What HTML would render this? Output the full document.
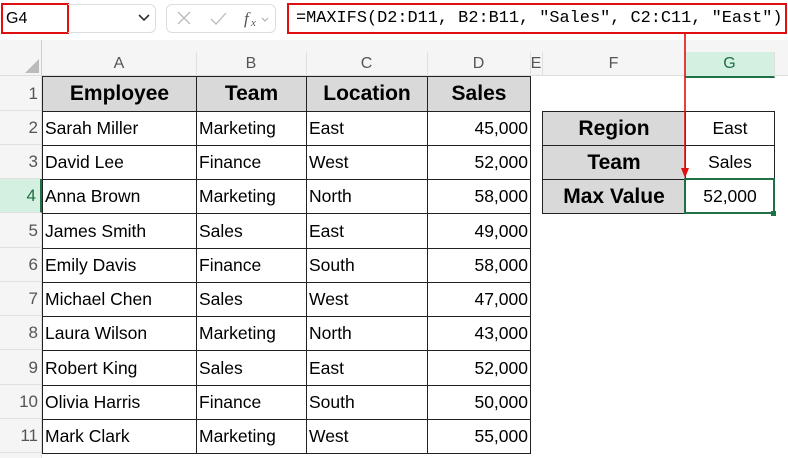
<!DOCTYPE html>
<html><head><style>
body{margin:0;width:788px;height:458px;overflow:hidden;background:#fff;font-family:"Liberation Sans",Arial,sans-serif;position:relative}
.a{position:absolute;box-sizing:border-box}
.ch{position:absolute;top:52px;height:24px;line-height:24px;text-align:center;color:#555;font-size:16px;border-right:1px solid #e0e0e0}
.rh{position:absolute;left:0;width:42px;text-align:right;padding-right:4px;box-sizing:border-box;color:#555;font-size:17px;border-bottom:1px solid #e0e0e0}
table{border-collapse:collapse;position:absolute;left:42px;top:76px}
td{border:1px solid #222;font-size:17.5px;padding:0 2px;white-space:nowrap;box-sizing:border-box}
td.h{background:#d9d9d9;font-weight:bold;font-size:21px;text-align:center}
td.n{text-align:right}
table.s{left:542px;top:111px}
table.s td{height:34px}
</style></head><body>
<div class="a" style="left:1px;top:3px;width:68px;height:31px;border:2px solid #e01010;font-size:16px;line-height:27px;padding-left:3px">G4</div>
<div class="a" style="left:68px;top:4px;width:88px;height:29px;border:1px solid #ddd;border-left:none;border-radius:0 6px 6px 0"></div>
<svg class="a" style="left:137px;top:13px" width="14" height="10"><path d="M2 2 L7 7 L12 2" stroke="#333" stroke-width="1.6" fill="none"/></svg>
<div class="a" style="left:166px;top:4px;width:110px;height:29px;border:1px solid #ddd;border-radius:6px"></div>
<svg class="a" style="left:174px;top:10px" width="100" height="18"><path d="M4 2 L16 14 M16 2 L4 14" stroke="#bbb" stroke-width="1.3"/><path d="M37 9 L42 14 L52 3" stroke="#bbb" stroke-width="1.3" fill="none"/><text x="70" y="14" font-family="Liberation Serif" font-style="italic" font-size="17" fill="#555">f</text><text x="77" y="16" font-family="Liberation Serif" font-style="italic" font-size="11" fill="#555">x</text><path d="M88 8 L91 11 L94 8" stroke="#aaa" fill="none"/></svg>
<div class="a" style="left:287px;top:3px;width:500px;height:31px;border:2px solid #e01010;font-family:'Liberation Mono',monospace;font-size:16.9px;line-height:27px;padding-left:7px;white-space:nowrap;overflow:hidden">=MAXIFS(D2:D11, B2:B11, "Sales", C2:C11, "East")</div>
<div class="a" style="left:0;top:40px;width:788px;height:12px;background:#f5f5f5"></div>
<div class="a" style="left:0;top:52px;width:788px;height:24px;background:#f5f5f5;border-bottom:1px solid #ddd"></div>
<div class="a" style="left:0;top:76px;width:42px;height:382px;background:#f5f5f5;border-right:1px solid #ddd"></div>
<div class="a" style="left:41px;top:40px;width:1px;height:36px;background:#ccc"></div>
<svg class="a" style="left:24px;top:58px" width="16" height="16"><path d="M15 1 L15 15 L1 15 Z" fill="#bbb"/></svg>
<div class="ch" style="left:42px;width:154px">A</div>
<div class="ch" style="left:196px;width:110px">B</div>
<div class="ch" style="left:306px;width:121px">C</div>
<div class="ch" style="left:427px;width:103px">D</div>
<div class="ch" style="left:530px;width:12px">E</div>
<div class="ch" style="left:542px;width:143px">F</div>
<div class="ch" style="left:685px;width:89px;background:#d3f0e0;color:#1e6e42;border-bottom:2px solid #1e7145">G</div>
<div class="rh" style="top:76px;height:35px;line-height:35px">1</div>
<div class="rh" style="top:111px;height:34px;line-height:34px">2</div>
<div class="rh" style="top:145px;height:34px;line-height:34px">3</div>
<div class="rh" style="top:179px;height:34px;line-height:34px;background:#d3f0e0;color:#1e6e42;border-right:2px solid #1e7145">4</div>
<div class="rh" style="top:213px;height:35px;line-height:35px">5</div>
<div class="rh" style="top:248px;height:34px;line-height:34px">6</div>
<div class="rh" style="top:282px;height:34px;line-height:34px">7</div>
<div class="rh" style="top:316px;height:34px;line-height:34px">8</div>
<div class="rh" style="top:350px;height:35px;line-height:35px">9</div>
<div class="rh" style="top:385px;height:34px;line-height:34px">10</div>
<div class="rh" style="top:419px;height:34px;line-height:34px">11</div>
<table>
<colgroup><col style="width:154px"><col style="width:110px"><col style="width:121px"><col style="width:103px"></colgroup>
<tr style="height:35px"><td class="h">Employee</td><td class="h">Team</td><td class="h">Location</td><td class="h">Sales</td></tr>
<tr style="height:34px"><td>Sarah Miller</td><td>Marketing</td><td>East</td><td class="n">45,000</td></tr>
<tr style="height:34px"><td>David Lee</td><td>Finance</td><td>West</td><td class="n">52,000</td></tr>
<tr style="height:34px"><td>Anna Brown</td><td>Marketing</td><td>North</td><td class="n">58,000</td></tr>
<tr style="height:35px"><td>James Smith</td><td>Sales</td><td>East</td><td class="n">49,000</td></tr>
<tr style="height:34px"><td>Emily Davis</td><td>Finance</td><td>South</td><td class="n">58,000</td></tr>
<tr style="height:34px"><td>Michael Chen</td><td>Sales</td><td>West</td><td class="n">47,000</td></tr>
<tr style="height:34px"><td>Laura Wilson</td><td>Marketing</td><td>North</td><td class="n">43,000</td></tr>
<tr style="height:35px"><td>Robert King</td><td>Sales</td><td>East</td><td class="n">52,000</td></tr>
<tr style="height:34px"><td>Olivia Harris</td><td>Finance</td><td>South</td><td class="n">50,000</td></tr>
<tr style="height:34px"><td>Mark Clark</td><td>Marketing</td><td>West</td><td class="n">55,000</td></tr>
</table>
<table class="s">
<colgroup><col style="width:143px"><col style="width:89px"></colgroup>
<tr><td class="h">Region</td><td style="text-align:center">East</td></tr>
<tr><td class="h">Team</td><td style="text-align:center">Sales</td></tr>
<tr><td class="h">Max Value</td><td style="text-align:center">52,000</td></tr>
</table>
<div class="a" style="left:684px;top:178px;width:91px;height:36px;border:2px solid #1e7145"></div>
<div class="a" style="left:771px;top:211px;width:5px;height:5px;background:#1e7145"></div>
<svg class="a" style="left:678px;top:32px" width="16" height="150"><path d="M7 0 L7 138" stroke="#e01010" stroke-width="1.6"/><path d="M3 136 L7 146 L11 136 Z" fill="#e01010"/></svg>
</body></html>
